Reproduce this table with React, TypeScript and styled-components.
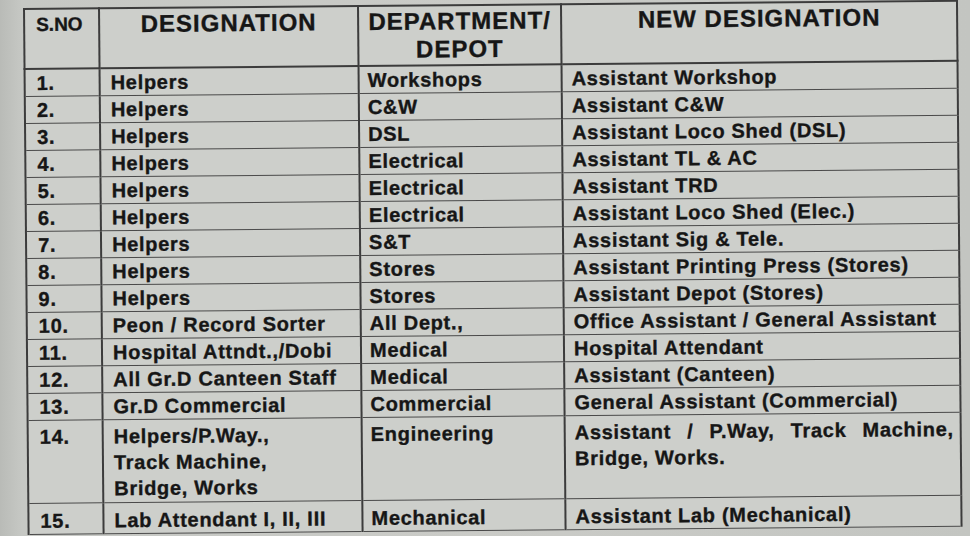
import React from "react";
import styled, { createGlobalStyle } from "styled-components";

const GlobalStyle = createGlobalStyle`
  html, body {
    margin: 0;
    padding: 0;
    background: #c4c6c2;
    overflow: hidden;
  }
  body {
    width: 970px;
    height: 536px;
    font-family: "Liberation Sans", Arial, sans-serif;
  }
`;

const Paper = styled.div`
  width: 970px;
  height: 536px;
  padding: 8px 0 0 23px;
  box-sizing: border-box;
  background: linear-gradient(90deg, #b9bbb7 0px, #c6c8c4 22px, #cacbc7 50%, #c3c5c1 100%);
`;

const Table = styled.table`
  width: 933px;
  border-collapse: collapse;
  table-layout: fixed;
  transform: rotate(-0.5deg);
  transform-origin: 0 0;
  color: #161616;
  font-weight: bold;
  background: #cdcfcb;
  -webkit-text-stroke: 0.35px #161616;
`;

const Col = styled.col<{ $w: number }>`
  width: ${({ $w }) => $w}px;
`;

const HeadCell = styled.th<{ $align?: string; $size?: number }>`
  height: 60px;
  box-sizing: border-box;
  padding: 1px 6px 0 ${({ $align }) => ($align === "left" ? "11px" : "6px")};
  border: 2px solid #3c3c3c;
  vertical-align: top;
  text-align: ${({ $align }) => $align || "center"};
  font-size: ${({ $size }) => $size || 24}px;
  line-height: 28px;
  letter-spacing: ${({ $size }) => ($size ? 0 : 1)}px;
  font-weight: bold;
`;

const Row = styled.tr<{ $h: number }>`
  height: ${({ $h }) => $h}px;
`;

const Cell = styled.td<{ $pad: number; $top?: boolean; $justify?: boolean }>`
  box-sizing: border-box;
  padding: ${({ $top }) => ($top ? "3px" : "0")} 6px 1px ${({ $pad }) => $pad}px;
  border-left: 2px solid #3c3c3c;
  border-right: 2px solid #3c3c3c;
  border-bottom: 1.5px solid #4a4a4a;
  vertical-align: ${({ $top }) => ($top ? "top" : "bottom")};
  text-align: ${({ $justify }) => ($justify ? "justify" : "left")};
  font-size: 20px;
  line-height: ${({ $top }) => ($top ? 26 : 24)}px;
  letter-spacing: 0.7px;
  white-space: ${({ $justify }) => ($justify ? "normal" : "nowrap")};
  overflow: hidden;
`;

type Entry = [string, string[], string, string];

const rows: Entry[] = [
  ["1.", ["Helpers"], "Workshops", "Assistant Workshop"],
  ["2.", ["Helpers"], "C&W", "Assistant C&W"],
  ["3.", ["Helpers"], "DSL", "Assistant Loco Shed (DSL)"],
  ["4.", ["Helpers"], "Electrical", "Assistant TL & AC"],
  ["5.", ["Helpers"], "Electrical", "Assistant TRD"],
  ["6.", ["Helpers"], "Electrical", "Assistant Loco Shed (Elec.)"],
  ["7.", ["Helpers"], "S&T", "Assistant Sig & Tele."],
  ["8.", ["Helpers"], "Stores", "Assistant Printing Press (Stores)"],
  ["9.", ["Helpers"], "Stores", "Assistant Depot (Stores)"],
  ["10.", ["Peon / Record Sorter"], "All Dept.,", "Office Assistant / General Assistant"],
  ["11.", ["Hospital Attndt.,/Dobi"], "Medical", "Hospital Attendant"],
  ["12.", ["All Gr.D Canteen Staff"], "Medical", "Assistant (Canteen)"],
  ["13.", ["Gr.D Commercial"], "Commercial", "General Assistant (Commercial)"],
  [
    "14.",
    ["Helpers/P.Way.,", "Track Machine,", "Bridge, Works"],
    "Engineering",
    "Assistant / P.Way, Track Machine, Bridge, Works.",
  ],
  ["15.", ["Lab Attendant I, II, III"], "Mechanical", "Assistant Lab (Mechanical)"],
];

const App: React.FC = () => {
  return (
    <>
      <GlobalStyle />
      <Paper>
        <Table>
          <colgroup>
            <Col $w={75} />
            <Col $w={259} />
            <Col $w={203} />
            <Col $w={396} />
          </colgroup>
          <thead>
            <tr>
              <HeadCell $align="left" $size={19}>S.NO</HeadCell>
              <HeadCell>DESIGNATION</HeadCell>
              <HeadCell>
                DEPARTMENT/
                <br />
                DEPOT
              </HeadCell>
              <HeadCell>NEW DESIGNATION</HeadCell>
            </tr>
          </thead>
          <tbody>
            {rows.map(([no, desig, dept, next]) => {
              const tall = desig.length > 1;
              const h = tall ? 80 : no === "15." ? 31 : 27;
              return (
                <Row key={no} $h={h}>
                  <Cell $pad={11} $top={tall}>{no}</Cell>
                  <Cell $pad={10} $top={tall}>
                    {desig.map((line, i) => (
                      <React.Fragment key={line}>
                        {i > 0 && <br />}
                        {line}
                      </React.Fragment>
                    ))}
                  </Cell>
                  <Cell $pad={8} $top={tall}>{dept}</Cell>
                  <Cell $pad={9} $top={tall} $justify={tall}>{next}</Cell>
                </Row>
              );
            })}
          </tbody>
        </Table>
      </Paper>
    </>
  );
};

export default App;
